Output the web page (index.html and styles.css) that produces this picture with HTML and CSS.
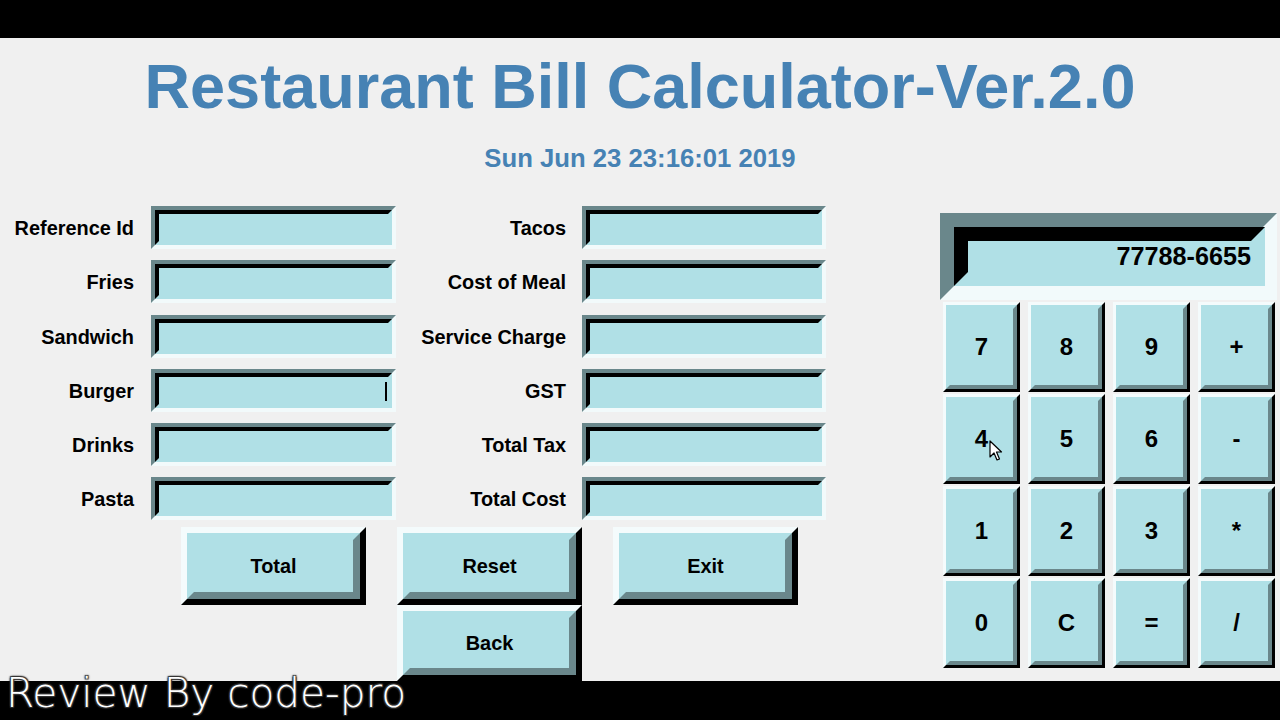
FILE: index.html
```html
<!DOCTYPE html>
<html lang="en">
<head>
  <meta charset="UTF-8">
  <meta name="viewport" content="width=device-width, initial-scale=1.0">
  <title>Restaurant Bill Calculator</title>
  <link rel="stylesheet" href="styles.css">
</head>
<body>
  <div class="frame">
    <div class="app">
      <h1 class="title">Restaurant Bill Calculator-Ver.2.0</h1>
      <div class="date">Sun Jun 23 23:16:01 2019</div>

      <div class="main">
        <div class="orders">
          <div class="fields">
            <label class="lbl">Reference Id</label>
            <div class="entry"><input type="text" class="entry-in"></div>
            <label class="lbl lbl-2">Tacos</label>
            <div class="entry"><input type="text" class="entry-in"></div>

            <label class="lbl">Fries</label>
            <div class="entry"><input type="text" class="entry-in"></div>
            <label class="lbl lbl-2">Cost of Meal</label>
            <div class="entry"><input type="text" class="entry-in"></div>

            <label class="lbl">Sandwich</label>
            <div class="entry"><input type="text" class="entry-in"></div>
            <label class="lbl lbl-2">Service Charge</label>
            <div class="entry"><input type="text" class="entry-in"></div>

            <label class="lbl">Burger</label>
            <div class="entry"><input type="text" class="entry-in"><span class="caret"></span></div>
            <label class="lbl lbl-2">GST</label>
            <div class="entry"><input type="text" class="entry-in"></div>

            <label class="lbl">Drinks</label>
            <div class="entry"><input type="text" class="entry-in"></div>
            <label class="lbl lbl-2">Total Tax</label>
            <div class="entry"><input type="text" class="entry-in"></div>

            <label class="lbl">Pasta</label>
            <div class="entry"><input type="text" class="entry-in"></div>
            <label class="lbl lbl-2">Total Cost</label>
            <div class="entry"><input type="text" class="entry-in"></div>
          </div>

          <div class="actions">
            <button class="btn"><span class="btn-in">Total</span></button>
            <button class="btn"><span class="btn-in">Reset</span></button>
            <button class="btn"><span class="btn-in">Exit</span></button>
            <button class="btn btn-back"><span class="btn-in">Back</span></button>
          </div>
        </div>

        <div class="calc">
          <div class="display"><div class="display-in">77788-6655</div></div>
          <div class="keys">
            <button class="key"><span class="key-in">7</span></button>
            <button class="key"><span class="key-in">8</span></button>
            <button class="key"><span class="key-in">9</span></button>
            <button class="key"><span class="key-in">+</span></button>
            <button class="key"><span class="key-in">4</span></button>
            <button class="key"><span class="key-in">5</span></button>
            <button class="key"><span class="key-in">6</span></button>
            <button class="key"><span class="key-in">-</span></button>
            <button class="key"><span class="key-in">1</span></button>
            <button class="key"><span class="key-in">2</span></button>
            <button class="key"><span class="key-in">3</span></button>
            <button class="key"><span class="key-in">*</span></button>
            <button class="key"><span class="key-in">0</span></button>
            <button class="key"><span class="key-in">C</span></button>
            <button class="key"><span class="key-in">=</span></button>
            <button class="key"><span class="key-in">/</span></button>
          </div>
        </div>
      </div>
    </div>

    <!-- mouse pointer over the "4" key -->
    <svg class="pointer" width="14" height="22" viewBox="0 0 14 22">
      <path d="M1 1 L1 17 L5 13 L8 20 L10.5 19 L7.5 12 L12.5 12 Z" fill="#fff" stroke="#000" stroke-width="1.2" stroke-linejoin="round"/>
    </svg>

    <div class="watermark">Review By code-pro</div>
  </div>
</body>
</html>
```

FILE: styles.css
```css
body {
  margin: 0;
  background-color: #000;
  font-family: "Liberation Sans", Arial, sans-serif;
}

.frame {
  position: relative;
  width: 1280px;
  height: 720px;
  padding-top: 38px;
  box-sizing: border-box;
  overflow: hidden;
}

.app {
  height: 643px;
  background-color: #f0f0f0;
  padding-top: 17px;
  box-sizing: border-box;
}

.title {
  margin: 0;
  font-size: 63px;
  line-height: 62px;
  font-weight: bold;
  color: #4682b4;
  text-align: center;
}

.date {
  margin-top: 26px;
  font-size: 25.7px;
  line-height: 30px;
  font-weight: bold;
  color: #4682b4;
  text-align: center;
}

.main {
  display: flex;
  align-items: flex-start;
  margin-top: 32px;
}

.orders {
  width: 940px;
  flex: none;
}

.fields {
  display: grid;
  grid-template-columns: 151px 245px 186px 244px;
  grid-auto-rows: 43px;
  row-gap: 11.3px;
  align-items: center;
  padding-top: 1px;
}

.lbl {
  font-size: 19.9px;
  font-weight: bold;
  color: #000;
  text-align: right;
  padding-right: 17px;
  padding-top: 2px;
}

.lbl-2 {
  padding-right: 16px;
}

/* sunken tk entry */
.entry {
  position: relative;
  height: 43px;
  box-sizing: border-box;
  border: 4px solid;
  border-color: #6a878b #f2fafb #f2fafb #6a878b;
}

.entry-in {
  display: block;
  width: 100%;
  height: 100%;
  box-sizing: border-box;
  margin: 0;
  padding: 0 4px;
  border: 4px solid;
  border-color: #000 #b0e0e6 #b0e0e6 #000;
  background-color: #b0e0e6;
  font-family: "Liberation Sans", Arial, sans-serif;
  font-size: 19px;
  outline: none;
}

.caret {
  position: absolute;
  left: 230px;
  top: 9px;
  width: 2px;
  height: 19px;
  background-color: #000;
}

.actions {
  display: grid;
  grid-template-columns: 185px 185px 185px;
  grid-template-rows: 78px 76px;
  column-gap: 31px;
  padding-left: 181px;
  margin-top: 7px;
}

/* raised tk button */
.btn {
  display: block;
  margin: 0;
  padding: 0;
  box-sizing: border-box;
  border: 6px solid;
  border-color: #f4fbfc #000 #000 #f4fbfc;
  background-color: #b0e0e6;
  font-family: "Liberation Sans", Arial, sans-serif;
  cursor: pointer;
}

.btn-in {
  display: flex;
  align-items: center;
  justify-content: center;
  height: 100%;
  box-sizing: border-box;
  border: 7px solid;
  border-color: #b0e0e6 #6a878b #6a878b #b0e0e6;
  font-size: 19.9px;
  font-weight: bold;
  color: #000;
}

.btn-back {
  grid-column: 2;
}

.calc {
  width: 337px;
  flex: none;
  margin-top: 8px;
}

.display {
  height: 87px;
  box-sizing: border-box;
  border: 14px solid;
  border-color: #6a878b #f2fafb #f2fafb #6a878b;
}

.display-in {
  height: 100%;
  box-sizing: border-box;
  border: 14px solid;
  border-color: #000 #b0e0e6 #b0e0e6 #000;
  background-color: #b0e0e6;
  display: flex;
  align-items: center;
  justify-content: flex-end;
  padding-right: 0;
  font-size: 25.2px;
  font-weight: bold;
  color: #000;
  margin-right: -2px;
}

.keys {
  display: grid;
  grid-template-columns: repeat(4, 77px);
  grid-auto-rows: 90px;
  column-gap: 8px;
  row-gap: 2px;
  margin-top: 2px;
  margin-left: 3px;
}

.key {
  display: block;
  margin: 0;
  padding: 0;
  box-sizing: border-box;
  border: 3px solid;
  border-color: #f4fbfc #000 #000 #f4fbfc;
  background-color: #b0e0e6;
  font-family: "Liberation Sans", Arial, sans-serif;
  cursor: pointer;
}

.key-in {
  display: flex;
  align-items: center;
  justify-content: center;
  height: 100%;
  box-sizing: border-box;
  border: 4px solid;
  border-color: #b0e0e6 #6a878b #6a878b #b0e0e6;
  font-size: 24px;
  font-weight: bold;
  color: #000;
}

.pointer {
  position: absolute;
  left: 989px;
  top: 440px;
}

.watermark {
  position: absolute;
  left: 6px;
  top: 673px;
  font-family: "DejaVu Sans", sans-serif;
  font-weight: 200;
  font-size: 40.6px;
  line-height: 40px;
  color: #fff;
  text-shadow: 1px 1px 1px #333, -1px -1px 1px #333, 1px -1px 1px #333, -1px 1px 1px #333, 0 0 3px #222;
  white-space: nowrap;
}
```
